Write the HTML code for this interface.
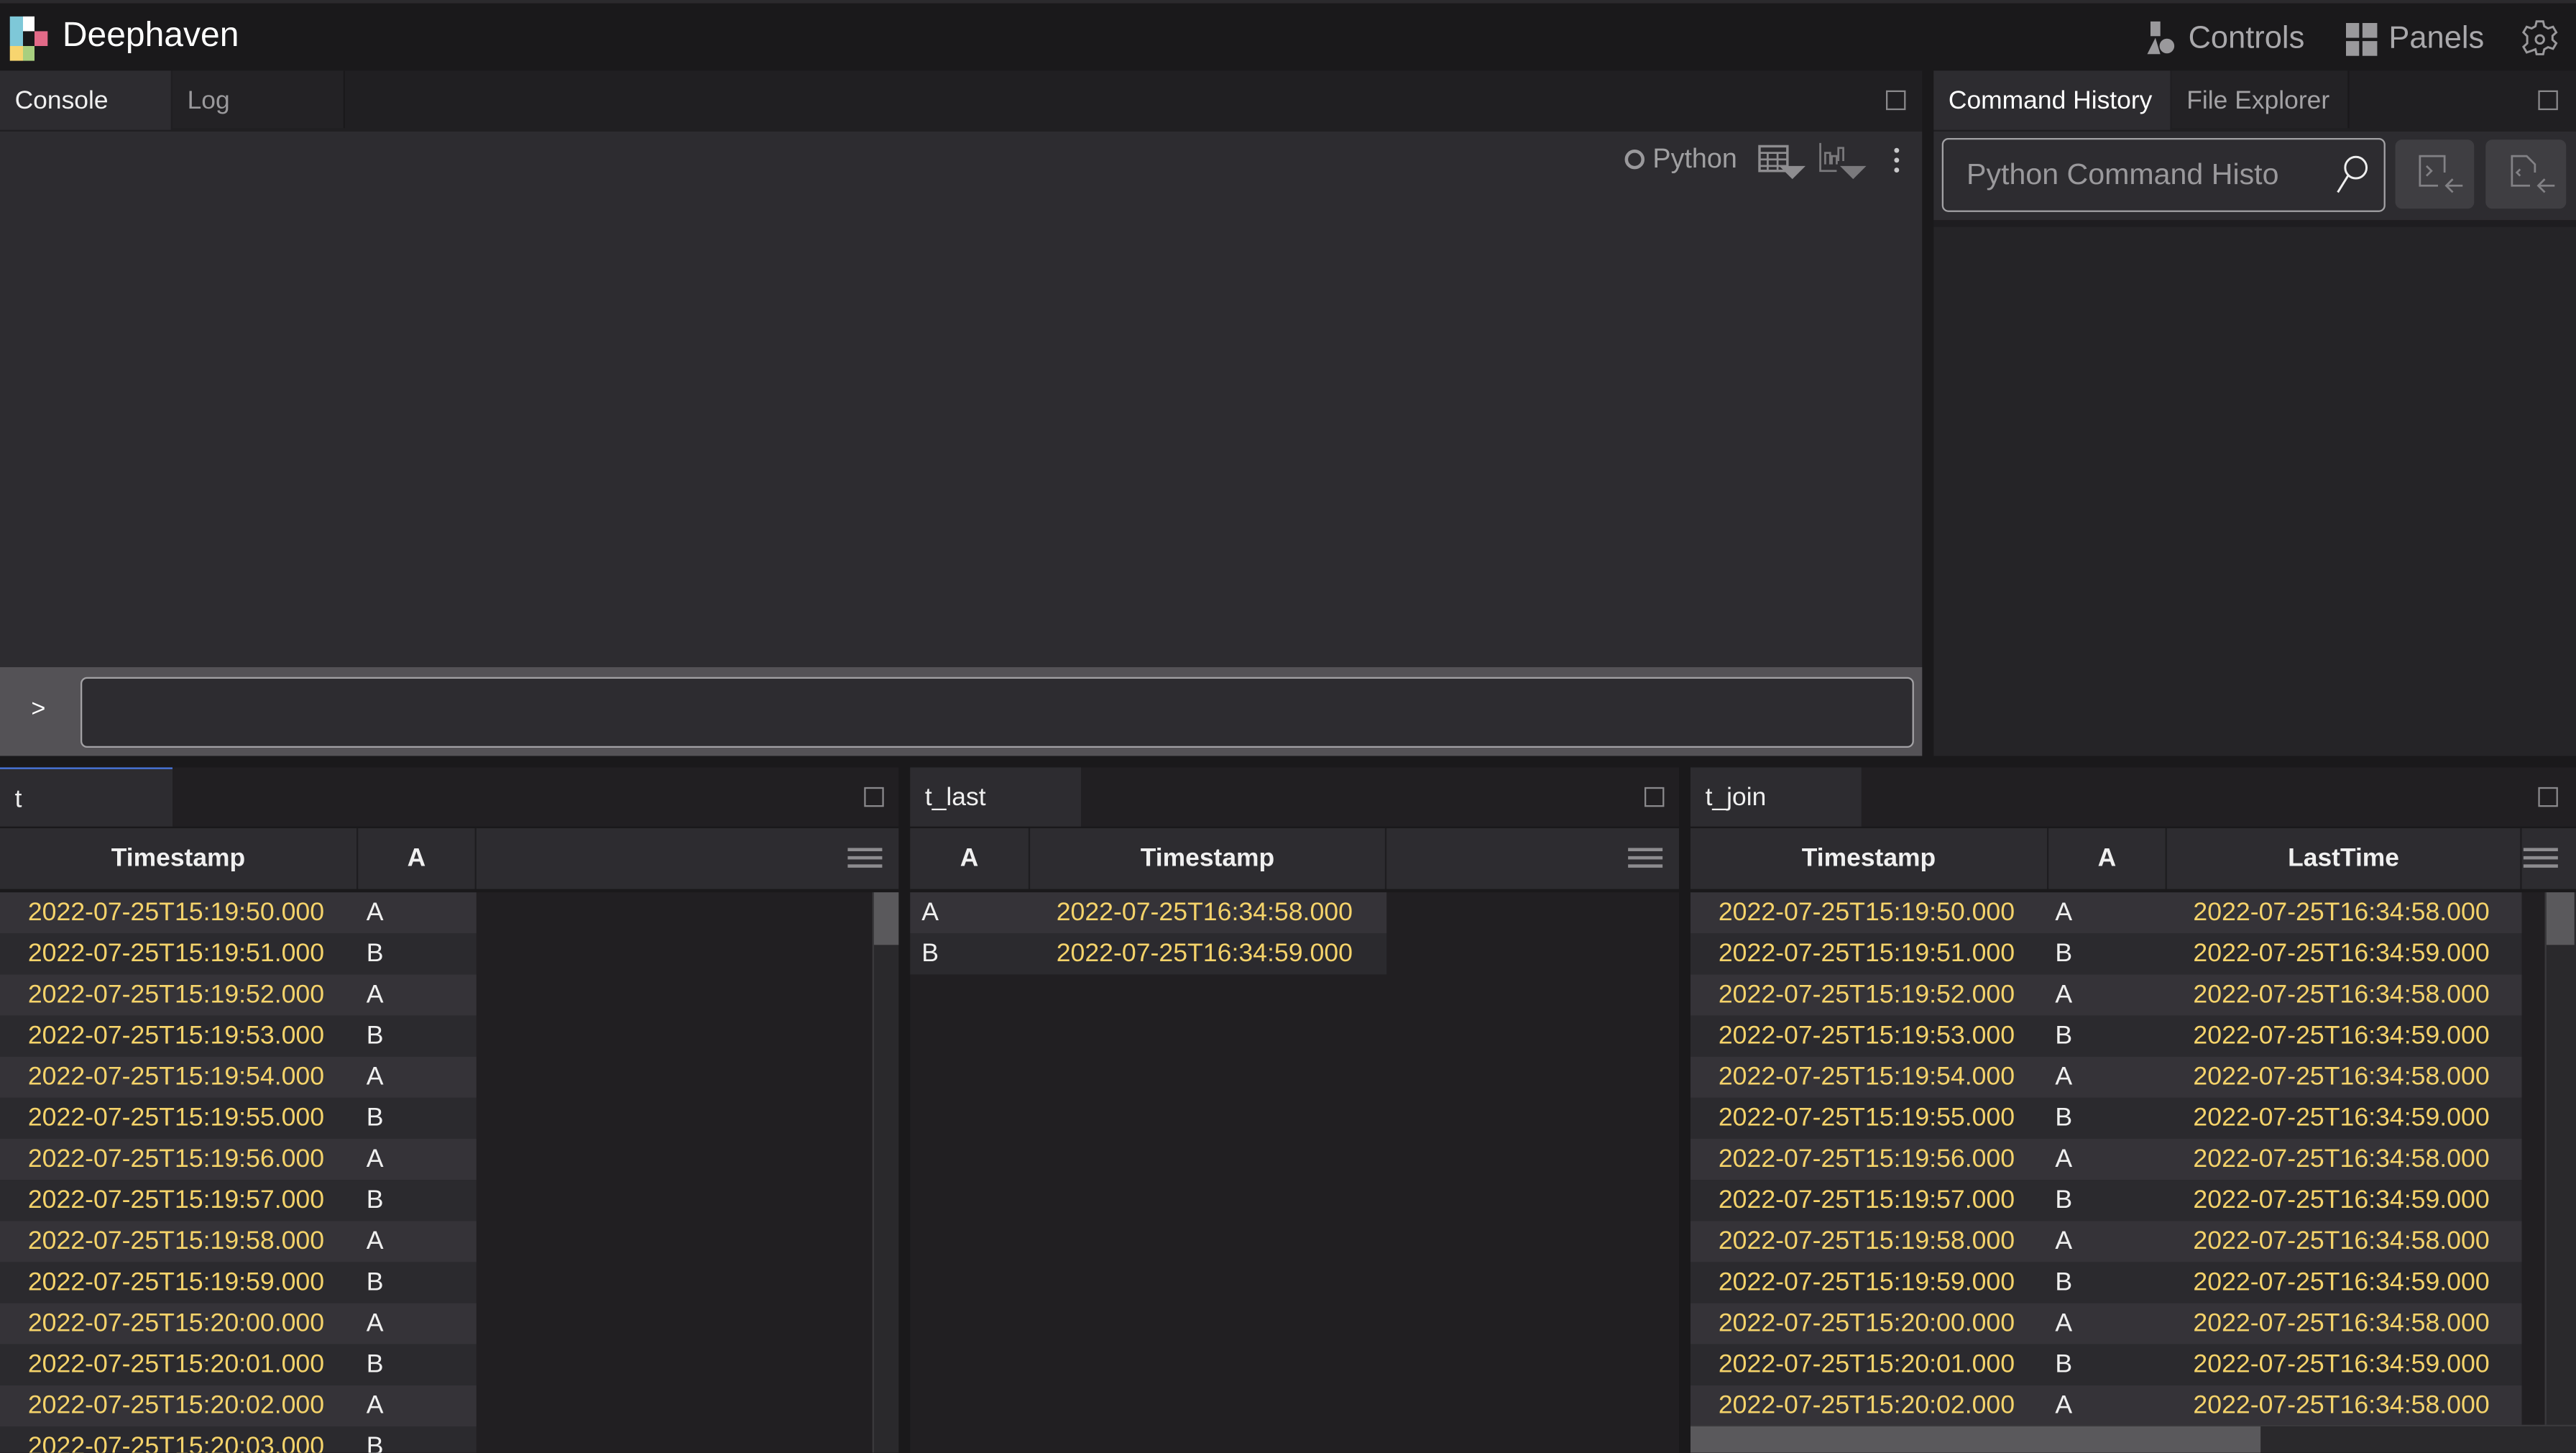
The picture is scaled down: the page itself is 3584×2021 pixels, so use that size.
<!DOCTYPE html>
<html><head><meta charset="utf-8"><style>
*{margin:0;padding:0;box-sizing:border-box}
html,body{width:3584px;height:2020px;overflow:hidden;background:#1a191b}
#w{position:absolute;left:0;top:0;width:1568px;height:884px;transform:scale(2.285714);transform-origin:0 0;font-family:"Liberation Sans",sans-serif;color:#f0f0f0;background:#1a191b}
.a{position:absolute}
.tab{position:absolute;top:0;height:36px;line-height:37px;font-size:15.5px;padding-left:9px}
.max{position:absolute;width:12px;height:12px;border:1.3px solid #8a898c}
.hd{position:absolute;height:38px;line-height:38px;font-size:15.5px;font-weight:bold;text-align:center;background:#2d2c30;border-right:1px solid #1e1d20}
.r{position:absolute;height:25px;line-height:25px;font-size:15.6px;white-space:nowrap}
.y{color:#f5d36a}
.menu{position:absolute;width:21px;height:12px;border-top:2px solid #8d8c8f;border-bottom:2px solid #8d8c8f}
.menu:after{content:"";position:absolute;left:0;right:0;top:3px;border-top:2px solid #8d8c8f}
</style></head><body><div id="w">
<!-- header -->
<div class="a" style="left:0;top:0;width:1568px;height:2px;background:#2b2a2d"></div>
<div class="a" style="left:6px;top:10px;width:8px;height:18px;background:#7ec8d8"></div>
<div class="a" style="left:14px;top:10px;width:7px;height:9px;background:#fff"></div>
<div class="a" style="left:21px;top:19px;width:8px;height:9px;background:#e26a88"></div>
<div class="a" style="left:6px;top:28px;width:8px;height:9px;background:#f7d56f"></div>
<div class="a" style="left:14px;top:28px;width:7px;height:9px;background:#a8cf7f"></div>
<div class="a" style="left:38px;top:10px;font-size:21px;color:#fff">Deephaven</div>
<svg class="a" style="left:1307px;top:13px" width="20" height="20" viewBox="0 0 20 20"><rect x="2" y="0" width="6" height="9" fill="#9a999c"/><polygon points="5,10 0,20 8,20" fill="#9a999c"/><circle cx="12" cy="15" r="4.5" fill="#9a999c"/></svg>
<div class="a" style="left:1332px;top:13px;font-size:19px;color:#a9a8ab">Controls</div>
<svg class="a" style="left:1427px;top:13px" width="22" height="22"><rect x="1" y="1" width="8" height="9" fill="#9a999c"/><rect x="11" y="1" width="9" height="9" fill="#9a999c"/><rect x="1" y="12" width="8" height="9" fill="#9a999c"/><rect x="11" y="12" width="9" height="9" fill="#9a999c"/></svg>
<div class="a" style="left:1454px;top:13px;font-size:19px;color:#a9a8ab">Panels</div>
<svg class="a" style="left:1534px;top:12px" width="24" height="24" viewBox="0 0 24 24"><path d="M10 1h4l.7 3 2.3 1.3 3-1 2 3.4-2.3 2.1v2.4l2.3 2.1-2 3.4-3-1-2.3 1.3-.7 3h-4l-.7-3L7 18.9l-3 1-2-3.4 2.3-2.1V12 10L2 7.7l2-3.4 3 1L9.3 4z" fill="none" stroke="#9a999c" stroke-width="1.3"/><circle cx="12" cy="12" r="2.5" fill="none" stroke="#9a999c" stroke-width="1.3"/></svg>

<!-- console panel -->
<div class="a" style="left:0;top:43px;width:1170px;height:37px;background:#201f22"></div>
<div class="tab" style="left:0;top:43px;width:104px;background:#2d2c30;color:#f0f0f0">Console</div>
<div class="tab" style="left:105px;top:43px;width:105px;background:#232225;color:#9a999c;border-right:1px solid #1a191b;height:35px">Log</div>
<div class="max" style="left:1148px;top:55px"></div>
<div class="a" style="left:0;top:80px;width:1170px;height:326px;background:#2d2c30"></div>
<div class="a" style="left:989px;top:91px;width:12px;height:12px;border:2.3px solid #9a999c;border-radius:50%"></div>
<div class="a" style="left:1006px;top:88px;font-size:16.5px;color:#a0a0a2">Python</div>
<svg class="a" style="left:1070px;top:88px" width="30" height="22"><rect x="1" y="1" width="17" height="15" fill="none" stroke="#8e8d90" stroke-width="1.5"/><path d="M1 5h17M1 9h17M1 13h17M6 5v11M12 5v11" stroke="#8e8d90" stroke-width="1.2"/><polygon points="13,13 29,13 21,21" fill="#8e8d90"/></svg>
<svg class="a" style="left:1106px;top:86px" width="32" height="24"><path d="M2 1v17h10M5 14V7h3v7M9 14V9h3v5M13 12V4h3v8" fill="none" stroke="#7a797c" stroke-width="1.2"/><polygon points="14,15 30,15 22,23" fill="#7a797c"/></svg>
<div class="a" style="left:1153px;top:90px;width:3px;height:3px;background:#c8c8ca;border-radius:50%;box-shadow:0 6px 0 #c8c8ca,0 12px 0 #c8c8ca"></div>
<div class="a" style="left:0;top:406px;width:1170px;height:54px;background:#545256"></div>
<div class="a" style="left:19px;top:423px;font-size:15px;color:#fff">&gt;</div>
<div class="a" style="left:49px;top:412px;width:1116px;height:43px;background:#2d2c30;border:1.2px solid #a3a2a5;border-radius:4px"></div>

<!-- right panel -->
<div class="a" style="left:1177px;top:43px;width:391px;height:37px;background:#201f22"></div>
<div class="tab" style="left:1177px;top:43px;width:144px;background:#2d2c30;color:#fff">Command History</div>
<div class="tab" style="left:1322px;top:43px;width:108px;background:#232225;color:#a3a2a5;border-right:1px solid #1a191b;height:35px">File Explorer</div>
<div class="max" style="left:1545px;top:55px"></div>
<div class="a" style="left:1177px;top:80px;width:391px;height:54px;background:#2d2c30"></div>
<div class="a" style="left:1182px;top:84px;width:270px;height:45px;background:#2d2c30;border:1.2px solid #a3a2a5;border-radius:4px"></div>
<div class="a" style="left:1197px;top:96px;font-size:18px;color:#9a999c">Python Command Histo</div>
<svg class="a" style="left:1420px;top:93px" width="24" height="26"><circle cx="14" cy="9" r="6.5" fill="none" stroke="#eee" stroke-width="1.3"/><path d="M9.5 13.5L3 24" stroke="#eee" stroke-width="1.3"/></svg>
<div class="a" style="left:1458px;top:85px;width:48px;height:42px;background:#3f3e42;border-radius:4px"></div>
<div class="a" style="left:1513px;top:85px;width:49px;height:42px;background:#3f3e42;border-radius:4px"></div>
<svg class="a" style="left:1470px;top:93px" width="30" height="28"><path d="M14 20H3V2h15v10M7 8l3 3-3 3M29 20H19M23 16l-4 4 4 4" fill="none" stroke="#828185" stroke-width="1.2"/></svg>
<svg class="a" style="left:1526px;top:93px" width="30" height="28"><path d="M14 20H3V2h9l5 5v5M8 10l-2 2 2 2M29 20H19M23 16l-4 4 4 4" fill="none" stroke="#828185" stroke-width="1.2"/></svg>
<div class="a" style="left:1177px;top:134px;width:391px;height:4px;background:#1e1d20"></div>
<div class="a" style="left:1177px;top:138px;width:391px;height:322px;background:#252427"></div>

<!-- bottom tables -->
<div class="a" style="left:0;top:467px;width:547px;height:417px;background:#211f22"></div>
<div class="a" style="left:554px;top:467px;width:468px;height:417px;background:#211f22"></div>
<div class="a" style="left:1029px;top:467px;width:539px;height:417px;background:#211f22"></div>
<div class="a" style="left:0;top:467px;width:105px;height:2px;background:#4a78e0"></div>
<div class="tab" style="left:0;top:468px;width:105px;height:35px;background:#2d2c30">t</div>
<div class="tab" style="left:554px;top:467px;width:104px;height:36px;background:#2d2c30">t_last</div>
<div class="tab" style="left:1029px;top:467px;width:104px;height:36px;background:#2d2c30">t_join</div>
<div class="max" style="left:526px;top:479px"></div>
<div class="max" style="left:1001px;top:479px"></div>
<div class="max" style="left:1545px;top:479px"></div>
<div class="a" style="left:0;top:503px;width:547px;height:2px;background:#1a191b"></div>
<div class="a" style="left:554px;top:503px;width:468px;height:2px;background:#1a191b"></div>
<div class="a" style="left:1029px;top:503px;width:539px;height:2px;background:#1a191b"></div>
<!-- headers -->
<div class="hd" style="left:0;top:504px;width:218px">Timestamp</div>
<div class="hd" style="left:218px;top:504px;width:72px">A</div>
<div class="hd" style="left:290px;top:504px;width:257px;border:none"></div>
<div class="menu" style="left:516px;top:516px"></div>
<div class="hd" style="left:554px;top:504px;width:73px">A</div>
<div class="hd" style="left:627px;top:504px;width:217px">Timestamp</div>
<div class="hd" style="left:844px;top:504px;width:178px;border:none"></div>
<div class="menu" style="left:991px;top:516px"></div>
<div class="hd" style="left:1029px;top:504px;width:218px">Timestamp</div>
<div class="hd" style="left:1247px;top:504px;width:72px">A</div>
<div class="hd" style="left:1319px;top:504px;width:216px">LastTime</div>
<div class="hd" style="left:1535px;top:504px;width:33px;border:none"></div>
<div class="menu" style="left:1536px;top:516px"></div>
<div class="a" style="left:0;top:541px;width:547px;height:2px;background:#1a191b"></div>
<div class="a" style="left:554px;top:541px;width:468px;height:2px;background:#1a191b"></div>
<div class="a" style="left:1029px;top:541px;width:539px;height:2px;background:#1a191b"></div>
<!-- scrollbars -->
<div class="a" style="left:531px;top:543px;width:16px;height:341px;background:#2a292c;border-left:1px solid #3a393c"></div>
<div class="a" style="left:532px;top:543px;width:15px;height:32px;background:#5a595c"></div>
<div class="a" style="left:1549px;top:543px;width:19px;height:325px;background:#2a292c;border-left:1px solid #3a393c"></div>
<div class="a" style="left:1550px;top:543px;width:17px;height:32px;background:#5a595c"></div>
<!-- t rows -->
<div class="a" style="left:0;top:543px;width:290px;height:341px;overflow:hidden">
<div class="r" style="top:0;width:290px;background:#353338"><span class="y a" style="left:17px">2022-07-25T15:19:50.000</span><span class="a" style="left:223px">A</span></div>
<div class="r" style="top:25px;width:290px;background:#2b2a2e"><span class="y a" style="left:17px">2022-07-25T15:19:51.000</span><span class="a" style="left:223px">B</span></div>
<div class="r" style="top:50px;width:290px;background:#353338"><span class="y a" style="left:17px">2022-07-25T15:19:52.000</span><span class="a" style="left:223px">A</span></div>
<div class="r" style="top:75px;width:290px;background:#2b2a2e"><span class="y a" style="left:17px">2022-07-25T15:19:53.000</span><span class="a" style="left:223px">B</span></div>
<div class="r" style="top:100px;width:290px;background:#353338"><span class="y a" style="left:17px">2022-07-25T15:19:54.000</span><span class="a" style="left:223px">A</span></div>
<div class="r" style="top:125px;width:290px;background:#2b2a2e"><span class="y a" style="left:17px">2022-07-25T15:19:55.000</span><span class="a" style="left:223px">B</span></div>
<div class="r" style="top:150px;width:290px;background:#353338"><span class="y a" style="left:17px">2022-07-25T15:19:56.000</span><span class="a" style="left:223px">A</span></div>
<div class="r" style="top:175px;width:290px;background:#2b2a2e"><span class="y a" style="left:17px">2022-07-25T15:19:57.000</span><span class="a" style="left:223px">B</span></div>
<div class="r" style="top:200px;width:290px;background:#353338"><span class="y a" style="left:17px">2022-07-25T15:19:58.000</span><span class="a" style="left:223px">A</span></div>
<div class="r" style="top:225px;width:290px;background:#2b2a2e"><span class="y a" style="left:17px">2022-07-25T15:19:59.000</span><span class="a" style="left:223px">B</span></div>
<div class="r" style="top:250px;width:290px;background:#353338"><span class="y a" style="left:17px">2022-07-25T15:20:00.000</span><span class="a" style="left:223px">A</span></div>
<div class="r" style="top:275px;width:290px;background:#2b2a2e"><span class="y a" style="left:17px">2022-07-25T15:20:01.000</span><span class="a" style="left:223px">B</span></div>
<div class="r" style="top:300px;width:290px;background:#353338"><span class="y a" style="left:17px">2022-07-25T15:20:02.000</span><span class="a" style="left:223px">A</span></div>
<div class="r" style="top:325px;width:290px;background:#2b2a2e"><span class="y a" style="left:17px">2022-07-25T15:20:03.000</span><span class="a" style="left:223px">B</span></div>
</div>
<!-- t_last rows -->
<div class="r" style="left:554px;top:543px;width:290px;background:#353338"><span class="a" style="left:7px">A</span><span class="y a" style="left:89px">2022-07-25T16:34:58.000</span></div>
<div class="r" style="left:554px;top:568px;width:290px;background:#2b2a2e"><span class="a" style="left:7px">B</span><span class="y a" style="left:89px">2022-07-25T16:34:59.000</span></div>
<!-- t_join rows -->
<div class="a" style="left:1029px;top:543px;width:506px;height:325px;overflow:hidden">
<div class="r" style="top:0;width:506px;background:#353338"><span class="y a" style="left:17px">2022-07-25T15:19:50.000</span><span class="a" style="left:222px">A</span><span class="y a" style="left:306px">2022-07-25T16:34:58.000</span></div>
<div class="r" style="top:25px;width:506px;background:#2b2a2e"><span class="y a" style="left:17px">2022-07-25T15:19:51.000</span><span class="a" style="left:222px">B</span><span class="y a" style="left:306px">2022-07-25T16:34:59.000</span></div>
<div class="r" style="top:50px;width:506px;background:#353338"><span class="y a" style="left:17px">2022-07-25T15:19:52.000</span><span class="a" style="left:222px">A</span><span class="y a" style="left:306px">2022-07-25T16:34:58.000</span></div>
<div class="r" style="top:75px;width:506px;background:#2b2a2e"><span class="y a" style="left:17px">2022-07-25T15:19:53.000</span><span class="a" style="left:222px">B</span><span class="y a" style="left:306px">2022-07-25T16:34:59.000</span></div>
<div class="r" style="top:100px;width:506px;background:#353338"><span class="y a" style="left:17px">2022-07-25T15:19:54.000</span><span class="a" style="left:222px">A</span><span class="y a" style="left:306px">2022-07-25T16:34:58.000</span></div>
<div class="r" style="top:125px;width:506px;background:#2b2a2e"><span class="y a" style="left:17px">2022-07-25T15:19:55.000</span><span class="a" style="left:222px">B</span><span class="y a" style="left:306px">2022-07-25T16:34:59.000</span></div>
<div class="r" style="top:150px;width:506px;background:#353338"><span class="y a" style="left:17px">2022-07-25T15:19:56.000</span><span class="a" style="left:222px">A</span><span class="y a" style="left:306px">2022-07-25T16:34:58.000</span></div>
<div class="r" style="top:175px;width:506px;background:#2b2a2e"><span class="y a" style="left:17px">2022-07-25T15:19:57.000</span><span class="a" style="left:222px">B</span><span class="y a" style="left:306px">2022-07-25T16:34:59.000</span></div>
<div class="r" style="top:200px;width:506px;background:#353338"><span class="y a" style="left:17px">2022-07-25T15:19:58.000</span><span class="a" style="left:222px">A</span><span class="y a" style="left:306px">2022-07-25T16:34:58.000</span></div>
<div class="r" style="top:225px;width:506px;background:#2b2a2e"><span class="y a" style="left:17px">2022-07-25T15:19:59.000</span><span class="a" style="left:222px">B</span><span class="y a" style="left:306px">2022-07-25T16:34:59.000</span></div>
<div class="r" style="top:250px;width:506px;background:#353338"><span class="y a" style="left:17px">2022-07-25T15:20:00.000</span><span class="a" style="left:222px">A</span><span class="y a" style="left:306px">2022-07-25T16:34:58.000</span></div>
<div class="r" style="top:275px;width:506px;background:#2b2a2e"><span class="y a" style="left:17px">2022-07-25T15:20:01.000</span><span class="a" style="left:222px">B</span><span class="y a" style="left:306px">2022-07-25T16:34:59.000</span></div>
<div class="r" style="top:300px;width:506px;background:#353338"><span class="y a" style="left:17px">2022-07-25T15:20:02.000</span><span class="a" style="left:222px">A</span><span class="y a" style="left:306px">2022-07-25T16:34:58.000</span></div>
</div>
<div class="a" style="left:1029px;top:867px;width:539px;height:17px;background:#2a292c;border-top:1px solid #3a393c"></div>
<div class="a" style="left:1029px;top:868px;width:347px;height:16px;background:#5a595c"></div>
</div></body></html>
